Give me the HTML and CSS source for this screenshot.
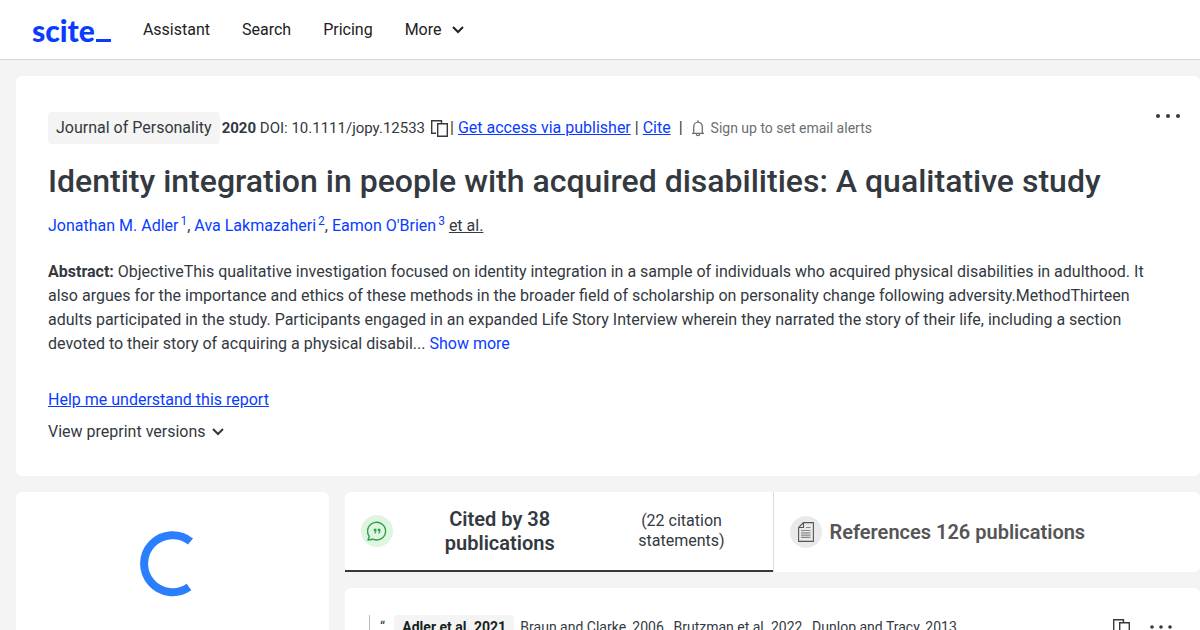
FILE: index.html
```html
<!DOCTYPE html>
<html lang="en">
  <head>
    <meta charset="utf-8" />
    <meta name="viewport" content="width=device-width, initial-scale=1.0" />

    <title>Identity integration in people with acquired disabilities - scite</title>

    <link rel="stylesheet" href="styles.css">
  </head>
  <body>
    <header class="navbar">
      <a class="logo" href="#">scite<span class="logo-bar"></span></a>
      <nav class="nav-links">
        <a href="#">Assistant</a>
        <a href="#">Search</a>
        <a href="#">Pricing</a>
        <button class="more">
          More
          <svg width="12" height="8" viewBox="0 0 12 8"><path d="M1 1l5 5 5-5" fill="none" stroke="currentColor" stroke-width="2" /></svg>
        </button>
      </nav>
    </header>

    <main class="page">
      <section class="card report">
        <button class="menu" aria-label="Report options">
          <svg width="24" height="4" viewBox="0 0 24 4" fill="#33393f"><circle cx="2" cy="2" r="2" /><circle cx="12" cy="2" r="2" /><circle cx="22" cy="2" r="2" /></svg>
        </button>

        <div class="meta">
          <span class="journal">Journal of Personality</span>
          <span class="doi"><b>2020</b> DOI: 10.1111/jopy.12533</span>
          <button class="copy" aria-label="Copy DOI">
            <svg width="17" height="17" viewBox="0 0 17 17"><path d="M10.5 3V.7H.7v12.6H5M6.7 3.7h9.6v12.6H6.7z" fill="none" stroke="currentColor" stroke-width="1.4" /></svg>
          </button>
          <span class="sources">| <a href="#">Get access via publisher</a> | <a href="#">Cite</a></span>
          <span>|</span>
          <button class="alerts">
            <svg width="14" height="17" viewBox="0 0 14 17"><path d="M1 13.3h12M2.7 13V6.7a4.3 4.5 0 0 1 8.6 0V13M7 2.2V.3M5.3 13.8a1.7 1.9 0 0 0 3.4 0" fill="none" stroke="currentColor" stroke-width="1.3" /></svg>
            Sign up to set email alerts
          </button>
        </div>

        <h1>Identity integration in people with acquired disabilities: A qualitative study</h1>

        <p class="authors">
          <a href="#">Jonathan M. Adler<sup>1</sup></a>,
          <a href="#">Ava Lakmazaheri<sup>2</sup></a>,
          <a href="#">Eamon O'Brien<sup>3</sup></a>
          <button class="et-al">et al.</button>
        </p>

        <p class="abstract">
          <b>Abstract:</b> ObjectiveThis qualitative investigation focused on identity integration in a sample of individuals who acquired physical disabilities in adulthood. It also argues for the importance and ethics of these methods in the broader field of scholarship on personality change following adversity.MethodThirteen adults participated in the study. Participants engaged in an expanded Life Story Interview wherein they narrated the story of their life, including a section devoted to their story of acquiring a physical disabil...
          <button class="show-more">Show more</button>
        </p>

        <a class="help" href="#">Help me understand this report</a>
        <button class="versions">
          View preprint versions
          <svg width="12" height="8" viewBox="0 0 12 8"><path d="M1 1l5 5 5-5" fill="none" stroke="currentColor" stroke-width="2" /></svg>
        </button>
      </section>

      <div class="columns">
        <aside class="card sidebar">
          <svg class="spinner" width="66" height="66" viewBox="0 0 66 66"><path d="M50.5 10.5A28.5 28.5 0 1 0 49 56" fill="none" stroke="#2b7fff" stroke-width="8" /></svg>
        </aside>

        <div class="results">
          <div class="card tabs">
            <button class="tab active">
              <span class="badge cited">
                <svg width="20" height="20" viewBox="0 0 20 20"><path d="M1 19l1.3-3.7A9 8.8 0 1 1 6 18.2L1 19z" fill="none" stroke="currentColor" stroke-width="1.4" stroke-linejoin="round" /><path d="M6.8 7.7h2.6v2.2c0 1.6-.8 2.4-2 2.8v-1c.6-.3.9-.8.9-1.4H6.8zM10.8 7.7h2.6v2.2c0 1.6-.8 2.4-2 2.8v-1c.6-.3.9-.8.9-1.4h-1.5z" fill="currentColor" /></svg>
              </span>
              <span class="tab-title">Cited by 38 publications</span>
              <span class="statements">(22 citation statements)</span>
            </button>
            <button class="tab">
              <span class="badge">
                <svg width="16" height="20" viewBox="0 0 16 20"><path d="M5.5.6h9.9v18.8H.6V5.5zM5.5.6v4.9H.6" fill="none" stroke="currentColor" stroke-width="1.1" /><path d="M8 5.5h4.5M3 8.5h9.5M3 10.8h9.5M3 13.1h9.5M3 15.4h9.5" fill="none" stroke="#888" stroke-width="1.2" /></svg>
              </span>
              <span class="tab-title">References 126 publications</span>
            </button>
          </div>

          <article class="card citation">
            <blockquote>
              “…<a class="source" href="#">Adler et al. 2021</a>, Braun and Clarke, 2006 , Brutzman et al. 2022 , Dunlop and Tracy, 2013 ,
            </blockquote>
            <div class="actions">
              <button aria-label="Copy citation">
                <svg width="17" height="17" viewBox="0 0 17 17"><path d="M10.5 3V.7H.7v12.6H5M6.7 3.7h9.6v12.6H6.7z" fill="none" stroke="currentColor" stroke-width="1.4" /></svg>
              </button>
              <button aria-label="Citation options">
                <svg width="22" height="4" viewBox="0 0 22 4" fill="#33393f"><circle cx="2" cy="2" r="1.8" /><circle cx="11" cy="2" r="1.8" /><circle cx="20" cy="2" r="1.8" /></svg>
              </button>
            </div>
          </article>
        </div>
      </div>
    </main>
  </body>
</html>
```
FILE: styles.css
```css
* {
  box-sizing: border-box;
}

body {
  margin: 0;
  background: #f4f4f4;
  color: #33393f;
  font-family: Roboto, "Liberation Sans", sans-serif;
  font-size: 16px;
  line-height: 24px;
}

a {
  color: #0a3cff;
}

button {
  padding: 0;
  border: 0;
  background: none;
  color: inherit;
  font: inherit;
  cursor: pointer;
}

svg {
  display: block;
  flex: none;
}

.navbar {
  display: flex;
  align-items: center;
  gap: 32px;
  height: 60px;
  padding: 0 32px;
  background: #fff;
  border-bottom: 1px solid #d8d8d8;
}

.logo {
  display: flex;
  align-items: flex-end;
  gap: 1px;
  color: #0a3cff;
  font-family: Lato, sans-serif;
  font-size: 30px;
  font-weight: 900;
  text-decoration: none;
}

.logo-bar {
  width: 15px;
  height: 3px;
  background: #0a3cff;
}

.nav-links {
  display: flex;
  gap: 32px;
  color: #212121;
}

.nav-links a {
  color: inherit;
  text-decoration: none;
}

.more,
.versions {
  display: flex;
  align-items: center;
  gap: 10px;
}

.page {
  padding: 16px 0 0 16px;
}

.card {
  background: #fff;
  border-radius: 6px;
}

.report {
  position: relative;
  padding: 36px 32px 32px;
}

.menu {
  position: absolute;
  top: 38px;
  right: 20px;
}

.meta {
  display: flex;
  align-items: center;
  gap: 8px;
}

.journal {
  margin-right: -6px;
  padding: 4px 8px;
  background: #f4f4f4;
  border-radius: 4px;
}

.doi {
  font-size: 15px;
}

.copy {
  margin: 0 -6px 0 -2px;
}

.alerts {
  display: flex;
  align-items: center;
  gap: 6px;
  color: #6b6f73;
  font-size: 14px;
}

h1 {
  margin: 16px 0 12px;
  font-size: 32px;
  font-weight: 500;
  line-height: 42px;
}

.authors,
.abstract {
  margin: 0;
}

.authors a {
  text-decoration: none;
}

.authors sup {
  margin-left: 2px;
  font-size: 12px;
  line-height: 0;
}

.et-al {
  text-decoration: underline;
}

.abstract {
  margin: 22px 0 32px;
}

.show-more {
  color: #0a3cff;
}

.versions {
  gap: 6px;
  margin-top: 8px;
}

.columns {
  display: grid;
  grid-template-columns: 313px 1fr;
  gap: 16px;
  margin-top: 16px;
}

.sidebar {
  padding: 39px 0;
}

.spinner {
  margin: 0 auto;
}

.tabs {
  display: grid;
  grid-template-columns: 1fr 1fr;
}

.tab {
  display: flex;
  align-items: center;
  gap: 8px;
  height: 80px;
  padding: 0 16px;
  color: #555;
}

.tab + .tab {
  border-left: 1px solid #ddd;
}

.tab.active {
  border-bottom: 2px solid #33393f;
  color: #33393f;
}

.badge {
  display: flex;
  flex: none;
  align-items: center;
  justify-content: center;
  width: 32px;
  height: 32px;
  background: #eaeaea;
  border-radius: 50%;
}

.cited {
  background: #def5e1;
  color: #2f9e44;
}

.tab-title {
  font-size: 20px;
  font-weight: 600;
}

.active .tab-title {
  flex: 1;
  padding: 0 28px;
}

.statements {
  width: 150px;
  padding: 0 16px;
  line-height: 20px;
}

.citation {
  display: flex;
  justify-content: space-between;
  margin-top: 16px;
  padding: 27px 28px 27px 24px;
}

blockquote {
  margin: 0;
  padding-left: 10px;
  border-left: 1px solid #bbb;
  font-size: 14px;
}

.source {
  display: inline-block;
  padding: 0 8px;
  background: #f4f4f4;
  border-radius: 4px;
  color: #14231c;
  font-weight: 700;
  text-decoration: none;
}

.actions {
  display: flex;
  align-items: center;
  gap: 20px;
}
```
